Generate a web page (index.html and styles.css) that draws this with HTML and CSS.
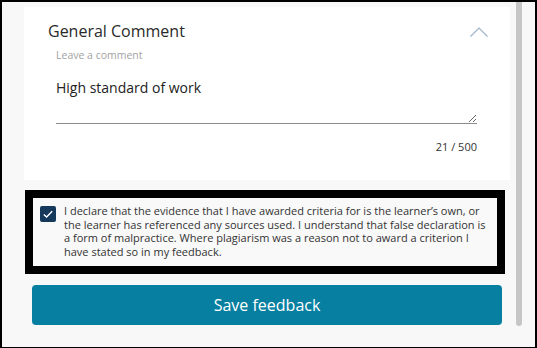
FILE: index.html
```html
<!DOCTYPE html>
<html lang="en">
  <head>
    <meta charset="UTF-8" />
    <meta name="viewport" content="width=device-width, initial-scale=1.0" />
    <title>Feedback</title>
    <link rel="stylesheet" href="styles.css">
  </head>
  <body>
    <div class="frame">
      <main class="panel">
        <section class="comment-card">
          <header class="comment-head">
            <h2>General Comment</h2>
            <svg class="chevron" width="18" height="10" viewBox="0 0 18 10">
              <polyline points="0.5,9.5 9,1 17.5,9.5" />
            </svg>
          </header>
          <div class="field">
            <label class="hint" for="comment">Leave a comment</label>
            <textarea id="comment" class="comment-input">High standard of work</textarea>
            <div class="counter">21 / 500</div>
          </div>
        </section>
        <div class="declaration">
          <span class="tick">
            <svg width="16" height="16" viewBox="0 0 16 16">
              <polyline points="3.8,8.4 6.6,11 12.2,5.2" />
            </svg>
          </span>
          <p>I declare that the evidence that I have awarded criteria for is the learner’s own, or the learner has referenced any sources used. I understand that false declaration is a form of malpractice. Where plagiarism was a reason not to award a criterion I have stated so in my feedback.</p>
        </div>
        <button class="save">Save feedback</button>
      </main>
      <div class="scrollbar"><div class="thumb"></div></div>
    </div>
  </body>
</html>
```

FILE: styles.css
```css
html,
body {
  margin: 0;
  height: 100%;
}
body {
  font-family: "Open Sans", "Liberation Sans", sans-serif;
  color: #333;
}
.frame {
  box-sizing: border-box;
  width: 537px;
  height: 348px;
  border: 2px solid #000;
  border-bottom-width: 1px;
  background-color: #f8f8f8;
  display: flex;
  overflow: hidden;
}
.panel {
  width: 486px;
  padding: 5px 0 0 22px;
  flex: none;
}

/* comment card */
.comment-card {
  background: #fff;
  padding: 13px 22px 26px 24px;
}
.comment-head {
  display: flex;
  justify-content: space-between;
  align-items: flex-start;
}
.comment-head h2 {
  margin: 0;
  font-size: 16px;
  line-height: 22px;
  font-weight: 400;
  color: #2a2a2a;
}
.chevron {
  margin-top: 7px;
}
.chevron polyline {
  fill: none;
  stroke: #9db4ca;
  stroke-width: 1.2;
}
.field {
  margin: 0 11px 0 8px;
}
.hint {
  display: block;
  margin-top: 6px;
  font-size: 10.5px;
  line-height: 14px;
  color: #a3a3a3;
}
.comment-input {
  display: block;
  box-sizing: content-box;
  width: 100%;
  height: 20px;
  margin: 2px 0 0;
  padding: 14px 0 25px;
  border: none;
  border-bottom: 1px solid #8c8c8c;
  outline: none;
  font-family: inherit;
  font-size: 14px;
  line-height: 20px;
  color: #222;
  background: #fff;
  resize: vertical;
}
.counter {
  margin-top: 15px;
  text-align: right;
  font-size: 11px;
  line-height: 15px;
  color: #333;
}

/* declaration */
.declaration {
  margin: 10px 5px 0 1px;
  border: 8px solid #000;
  padding: 6px 10px 7px 7px;
  display: flex;
  gap: 8px;
  background: #f9f9f9;
}
.tick {
  flex: none;
  width: 16px;
  height: 16px;
  margin-top: 2px;
  border-radius: 2px;
  background: #15395a;
}
.tick svg {
  display: block;
}
.tick polyline {
  fill: none;
  stroke: #fff;
  stroke-width: 1.4;
}
.declaration p {
  margin: 0;
  font-size: 11px;
  line-height: 13.7px;
  color: #333;
}

.save {
  display: block;
  width: 470px;
  height: 40px;
  margin: 11px 0 0 8px;
  border: none;
  border-radius: 4px;
  background: #077fa1;
  color: #fff;
  font-family: inherit;
  font-size: 16px;
  cursor: pointer;
}

/* fake scroll bar */
.scrollbar {
  margin-left: 6px;
  width: 6px;
  flex: none;
}
.thumb {
  height: 324px;
  background: #c6c6c6;
  border-radius: 0 0 3px 3px;
}
```
